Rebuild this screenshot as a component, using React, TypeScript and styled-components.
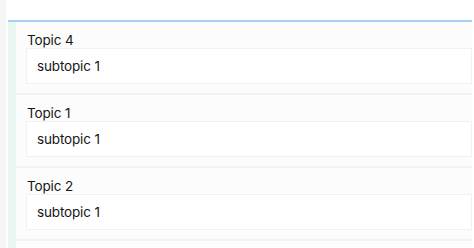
import React from "react";
import styled, { createGlobalStyle } from "styled-components";

const Global = createGlobalStyle`
  html, body { margin: 0; padding: 0; background: #ffffff; }
  body { font-family: Inter, "Noto Sans", sans-serif; color: #161616; }
`;

const Page = styled.div`
  display: flex;
  height: 248px;
  overflow: hidden;
`;

const Gutter = styled.div`
  width: 6px;
  flex: none;
  background: #f5f6f6;
`;

const Main = styled.div`
  flex: 1;
  display: flex;
  flex-direction: column;
  padding: 20px 2px 0 2px;
`;

const Frame = styled.div`
  flex: 1;
  display: flex;
  border-top: 2px solid #a6cdf3;
`;

const Rail = styled.div`
  width: 8px;
  flex: none;
  background: #e9f6f2;
`;

const List = styled.div`
  flex: 1;
  display: flex;
  flex-direction: column;
  background: #fdfdfd;
`;

const Group = styled.section`
  display: flex;
  flex-direction: column;
  padding: 10px 0 9px 10px;
  border-bottom: 2px solid #f3f3f3;
  background: #fcfcfc;
`;

const Title = styled.div`
  font-size: 13.5px;
  line-height: 16px;
  letter-spacing: -0.15px;
  padding-left: 1px;
`;

const Item = styled.div`
  height: 36px;
  box-sizing: border-box;
  display: flex;
  align-items: center;
  padding-left: 10px;
  background: #ffffff;
  border: 1px solid #f1f1f1;
  font-size: 13.5px;
  letter-spacing: -0.15px;
`;

const topics = ["Topic 4", "Topic 1", "Topic 2"];

export default function App() {
  return (
    <Page>
      <Global />
      <Gutter />
      <Main>
        <Frame>
          <Rail />
          <List>
            {topics.map((t) => (
              <Group key={t}>
                <Title>{t}</Title>
                <Item>subtopic 1</Item>
              </Group>
            ))}
          </List>
        </Frame>
      </Main>
    </Page>
  );
}
